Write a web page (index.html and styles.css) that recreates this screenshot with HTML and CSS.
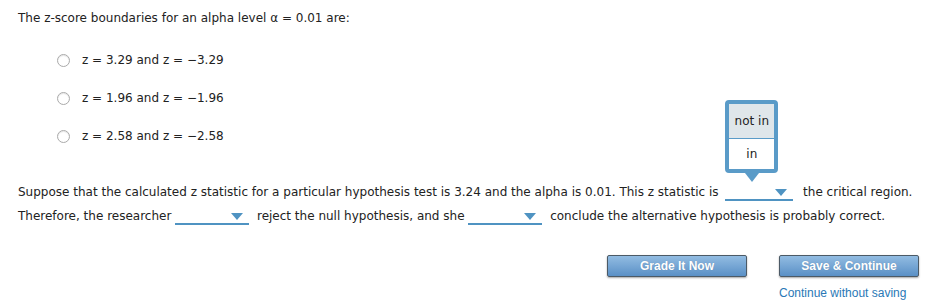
FILE: index.html
```html
<!DOCTYPE html>
<html>
<head>
<meta charset="utf-8">
<link rel="stylesheet" href="styles.css">
</head>
<body>
<div class="page">
  <p class="question">The z-score boundaries for an alpha level α = 0.01 are:</p>
  <ul class="options">
    <li class="option"><span class="radio"></span><span>z = 3.29 and z = −3.29</span></li>
    <li class="option"><span class="radio"></span><span>z = 1.96 and z = −1.96</span></li>
    <li class="option"><span class="radio"></span><span>z = 2.58 and z = −2.58</span></li>
  </ul>
  <p class="sentence">Suppose that the calculated z statistic for a particular hypothesis test is 3.24 and the alpha is 0.01. This z statistic is <span class="blank short open"><span class="popup"><span class="item selected">not in</span><span class="item">in</span></span></span> the critical region.</p>
  <p class="sentence">Therefore, the researcher <span class="blank"></span> reject the null hypothesis, and she <span class="blank"></span> conclude the alternative hypothesis is probably correct.</p>
  <div class="actions">
    <div class="action-col">
      <button class="btn">Grade It Now</button>
    </div>
    <div class="action-col">
      <button class="btn">Save &amp; Continue</button>
      <a class="link" href="#">Continue without saving</a>
    </div>
  </div>
</div>
</body>
</html>
```
FILE: styles.css
```css
html, body {
  margin: 0;
  padding: 0;
  background: #fff;
}
.page {
  font-family: "DejaVu Sans", Verdana, sans-serif;
  font-size: 12px;
  color: #222;
  padding: 10px 0 0 18px;
}
.question {
  margin: 0;
  line-height: 16px;
}
.options {
  list-style: none;
  margin: 26px 0 0 0;
  padding: 0 0 0 39px;
  display: flex;
  flex-direction: column;
  gap: 22px;
}
.option {
  display: flex;
  align-items: center;
  gap: 12px;
  height: 16px;
  line-height: 16px;
}
.radio {
  width: 11px;
  height: 11px;
  border: 1px solid #aaa;
  border-radius: 50%;
  background: #fff;
  box-shadow: inset 0 1px 1px rgba(0,0,0,0.1);
}
.sentence {
  margin: 0;
  line-height: 24px;
}
.options + .sentence {
  margin-top: 36px;
}
.blank {
  display: inline-block;
  position: relative;
  width: 74px;
  height: 14px;
  border-bottom: 2px solid #4f93c2;
  vertical-align: -5px;
  margin: 0 4px 0 0;
}
.blank.short {
  width: 68px;
  margin: 0 6px 0 3px;
}
.blank::after {
  content: "";
  position: absolute;
  right: 6px;
  top: 4px;
  border-left: 6px solid transparent;
  border-right: 6px solid transparent;
  border-top: 7px solid #4f93c2;
}
.popup {
  position: absolute;
  left: 0;
  bottom: 26px;
  width: 45px;
  border: 4px solid #5a9bc8;
  border-radius: 4px;
  background: #fff;
  display: flex;
  flex-direction: column;
}
.popup::after {
  content: "";
  position: absolute;
  left: 50%;
  margin-left: -7px;
  bottom: -13px;
  border-left: 7px solid transparent;
  border-right: 7px solid transparent;
  border-top: 9px solid #5a9bc8;
}
.item {
  height: 30px;
  line-height: 30px;
  text-align: center;
  font-size: 12px;
  color: #222;
}
.item.selected {
  height: 34px;
  line-height: 34px;
  background: #dfe6ea;
  border-bottom: 1px solid #5a9bc8;
}
.actions {
  display: flex;
  justify-content: flex-end;
  gap: 32px;
  padding-right: 28px;
  margin-top: 27px;
}
.action-col {
  display: flex;
  flex-direction: column;
  align-items: flex-start;
  gap: 9px;
}
.btn {
  width: 140px;
  height: 22px;
  border: 1px solid #4c5a66;
  border-radius: 2px;
  background: linear-gradient(#92bce2, #5a90c6);
  color: #fff;
  font-family: "Liberation Sans", Arial, sans-serif;
  font-weight: bold;
  font-size: 12px;
  text-shadow: 0 0 1px rgba(0,0,0,0.2);
  box-shadow: 0 1px 2px rgba(0,0,0,0.35);
  padding: 0;
}
.link {
  font-family: "Liberation Sans", Arial, sans-serif;
  font-size: 12px;
  color: #2a78b6;
  text-decoration: none;
}
```
